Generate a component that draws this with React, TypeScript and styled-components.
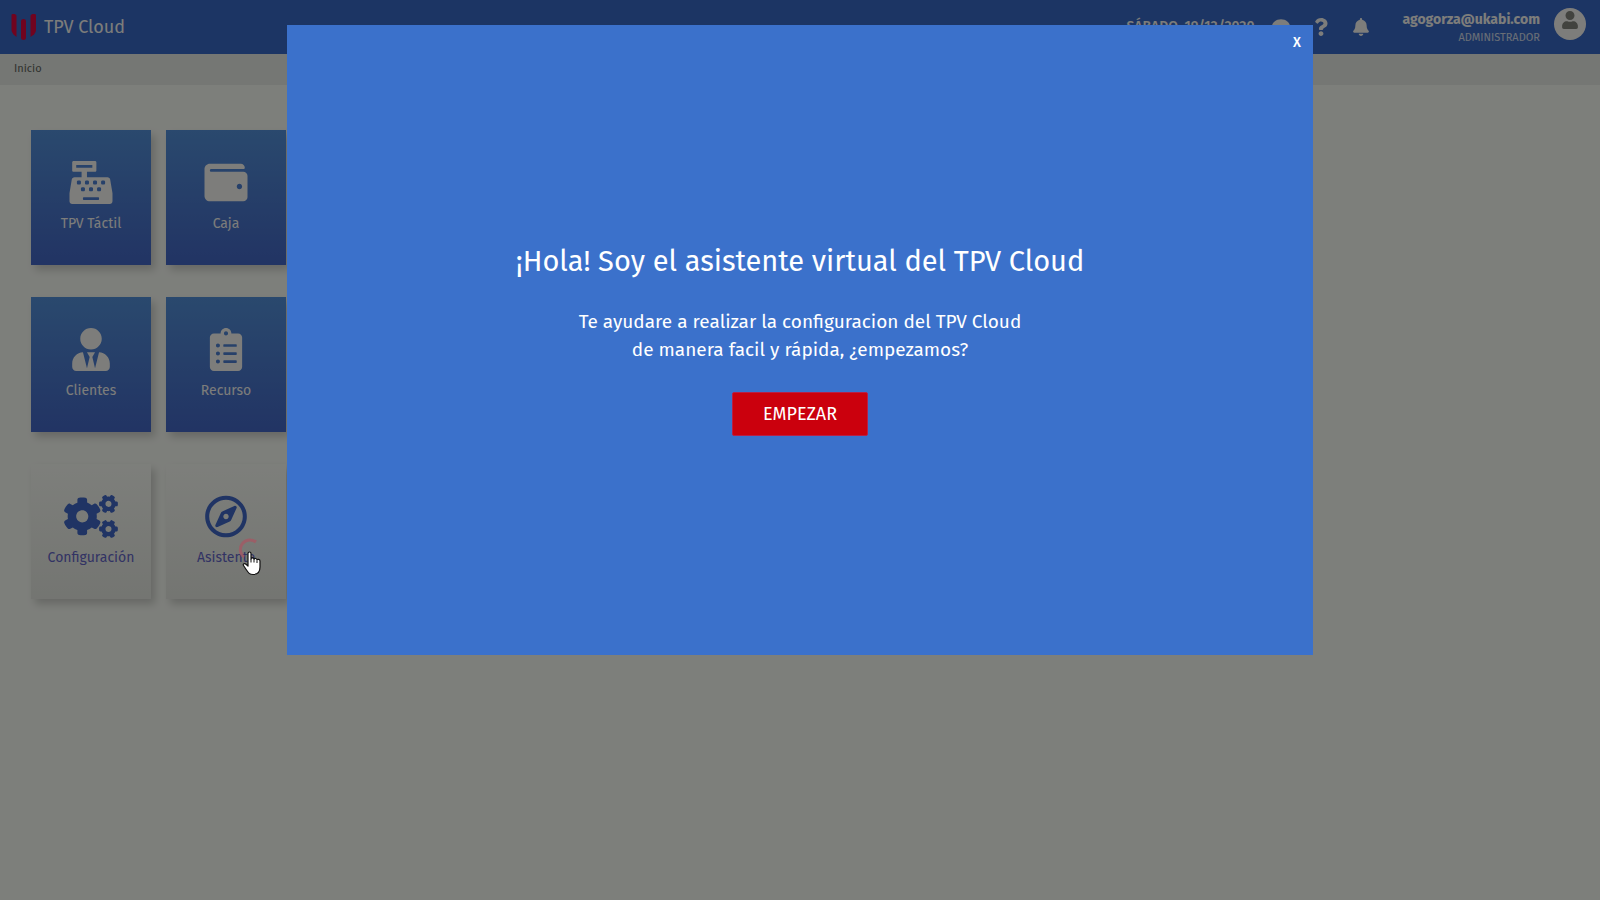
import React from "react";
import styled, { createGlobalStyle } from "styled-components";
import {
  FaBell,
  FaCashRegister,
  FaClipboardList,
  FaCogs,
  FaComment,
  FaQuestion,
  FaRegCompass,
  FaUser,
  FaUserTie,
  FaWallet,
} from "react-icons/fa";

const GlobalStyle = createGlobalStyle`
  *, *::before, *::after { box-sizing: border-box; }
  body {
    margin: 0;
    background: #fbfef7;
    font-family: "Fira Sans", "Noto Sans", sans-serif;
  }
  button { font-family: inherit; cursor: pointer; }
`;

const Page = styled.div`
  min-height: 100vh;
`;

const Header = styled.header`
  display: flex;
  align-items: center;
  height: 54px;
  padding: 0 14px 0 11px;
  background: #386ac8;
  color: #fafaf6;
`;

const Brand = styled.a`
  display: flex;
  align-items: center;
  gap: 7px;
  margin-right: auto;
  color: inherit;
  font-size: 18px;
  line-height: 24px;
  text-decoration: none;
`;

const Tools = styled.div`
  display: flex;
  align-items: center;
  gap: 12px;
`;

const Today = styled.time`
  font-size: 14px;
  line-height: 20px;
  font-weight: 500;
  text-transform: uppercase;
`;

const ToolButton = styled.button`
  display: grid;
  place-items: center;
  width: 28px;
  height: 28px;
  padding: 0;
  border: 0;
  background: none;
  color: inherit;
  font-size: 18px;
`;

const Account = styled.div`
  display: flex;
  align-items: center;
  gap: 14px;
  height: 48px;
  margin-left: 28px;
  align-self: flex-start;
`;

const AccountText = styled.div`
  text-align: right;
  padding-top: 8px;
`;

const Email = styled.div`
  font-size: 14px;
  line-height: 20px;
  font-weight: 700;
`;

const Role = styled.div`
  font-size: 11px;
  line-height: 16px;
  text-transform: uppercase;
  opacity: 0.8;
`;

const Avatar = styled.div`
  display: flex;
  justify-content: center;
  width: 32px;
  height: 32px;
  padding-top: 3px;
  border-radius: 50%;
  background: #fafaf6;
  color: #84867e;
  font-size: 18px;
`;

const Breadcrumb = styled.nav`
  display: flex;
  align-items: center;
  height: 31px;
  padding: 0 14px 2px;
  background: #ebeee8;
  color: #60645c;
  font-size: 11px;
  line-height: 16px;
`;

const Tiles = styled.main`
  display: grid;
  grid-template-columns: repeat(auto-fill, 120px);
  gap: 32px 15px;
  max-width: 286px;
  padding: 45px 0 45px 31px;
`;

const Tile = styled.button<{ $light?: boolean }>`
  display: flex;
  flex-direction: column;
  align-items: center;
  gap: 10px;
  width: 120px;
  height: 135px;
  padding: 31px 0 0;
  border: 0;
  background: ${(p) =>
    p.$light
      ? "linear-gradient(#fbfef7, #e8ebe4)"
      : "linear-gradient(#5492dc, #4468c8)"};
  box-shadow: 4px 5px 8px rgba(0, 0, 0, 0.18);
  color: ${(p) => (p.$light ? "#6466c8" : "#fafaf6")};
  font-size: 14px;
  line-height: 20px;

  svg {
    width: 54px;
    height: 43px;
    color: ${(p) => (p.$light ? "#4068c8" : "inherit")};
  }
`;

const Backdrop = styled.div`
  position: fixed;
  inset: 0;
  display: flex;
  justify-content: center;
  align-items: flex-start;
  padding-top: 25px;
  background: rgba(0, 0, 0, 0.5);
`;

const Dialog = styled.section`
  position: relative;
  display: flex;
  flex-direction: column;
  align-items: center;
  justify-content: center;
  width: calc(64% + 2px);
  height: 70vh;
  padding-bottom: 4px;
  background: #3b71cb;
  color: #fff;
  text-align: center;
`;

const CloseButton = styled.button`
  position: absolute;
  top: 4px;
  right: 6px;
  width: 20px;
  height: 28px;
  padding: 0;
  border: 0;
  background: none;
  color: #fff;
  font-size: 14px;
  line-height: 28px;
  font-weight: 500;
`;

const Title = styled.h1`
  margin: 0 0 24px;
  font-size: 29px;
  line-height: 44px;
  font-weight: 400;
`;

const Message = styled.p`
  margin: 0 0 28px;
  font-size: 19px;
  line-height: 28px;
`;

const StartButton = styled.button`
  height: 44px;
  padding: 0 30px;
  border: 1px solid #b81f46;
  border-radius: 2px;
  background: #cb000d;
  color: #fff;
  font-size: 18px;
  line-height: 24px;
`;

const Pointer = styled.svg`
  position: fixed;
  left: 236px;
  top: 536px;
  width: 30px;
  height: 42px;
  pointer-events: none;
`;

const tiles = [
  { label: "TPV Táctil", Icon: FaCashRegister },
  { label: "Caja", Icon: FaWallet },
  { label: "Clientes", Icon: FaUserTie },
  { label: "Recurso", Icon: FaClipboardList },
  { label: "Configuración", Icon: FaCogs, light: true },
  { label: "Asistente", Icon: FaRegCompass, light: true },
];

function Logo() {
  return (
    <svg width="26" height="28" viewBox="0 0 26 28" fill="#e0083e" aria-hidden="true">
      <path d="M0.5 2C0.5 0.5 5.5 0.5 5.5 3V24L2.5 21.5Q0.5 19.5 0.5 17Z" />
      <path d="M10 8Q10 6 12.5 6Q15 6 15 8V25Q15 27 12.5 27Q10 27 10 25Z" />
      <path d="M19.5 3C19.5 0.5 25 0.5 25 2V17Q25 19.5 23 21.5L19.5 24Z" />
    </svg>
  );
}

export default function App() {
  return (
    <>
      <GlobalStyle />
      <Page>
        <Header>
          <Brand href="#">
            <Logo />
            TPV Cloud
          </Brand>
          <Tools>
            <Today dateTime="2020-12-19">Sábado, 19/12/2020</Today>
            <ToolButton aria-label="Mensajes"><FaComment /></ToolButton>
            <ToolButton aria-label="Ayuda"><FaQuestion /></ToolButton>
            <ToolButton aria-label="Avisos"><FaBell /></ToolButton>
          </Tools>
          <Account>
            <AccountText>
              <Email>agogorza@ukabi.com</Email>
              <Role>Administrador</Role>
            </AccountText>
            <Avatar><FaUser /></Avatar>
          </Account>
        </Header>
        <Breadcrumb>Inicio</Breadcrumb>
        <Tiles>
          {tiles.map(({ label, Icon, light }) => (
            <Tile key={label} $light={light}>
              <Icon />
              {label}
            </Tile>
          ))}
        </Tiles>
      </Page>
      <Backdrop>
        <Dialog role="dialog" aria-modal="true" aria-labelledby="assistant-title">
          <CloseButton aria-label="Cerrar">X</CloseButton>
          <Title id="assistant-title">¡Hola! Soy el asistente virtual del TPV Cloud</Title>
          <Message>
            Te ayudare a realizar la configuracion del TPV Cloud
            <br />
            de manera facil y rápida, ¿empezamos?
          </Message>
          <StartButton>EMPEZAR</StartButton>
        </Dialog>
      </Backdrop>
      <Pointer viewBox="0 0 30 42" aria-hidden="true">
        <path d="M20 6A8.5 8.5 0 0 0 8 21" fill="none" stroke="#a65562" strokeWidth="3" opacity="0.75" />
        <path
          d="M12 17.5C12 15.5 15 15.5 15 17.5V23C15 21.5 18 21.5 18 23.3C18.2 22 21 22.2 21 24C21.4 23 24 23.2 24 25V31C24 36 21.5 38.5 17 38.5C13.5 38.5 12.5 37 10.5 34L7.5 29.5C6.5 28 8.5 26.8 10 28.2L12 30Z"
          fill="#fff"
          stroke="#111"
          strokeWidth="1.2"
          strokeLinejoin="round"
        />
        <path d="M15 23V26.5M18 23.5V26.5M21 24.5V27" stroke="#111" strokeWidth="1" />
      </Pointer>
    </>
  );
}
